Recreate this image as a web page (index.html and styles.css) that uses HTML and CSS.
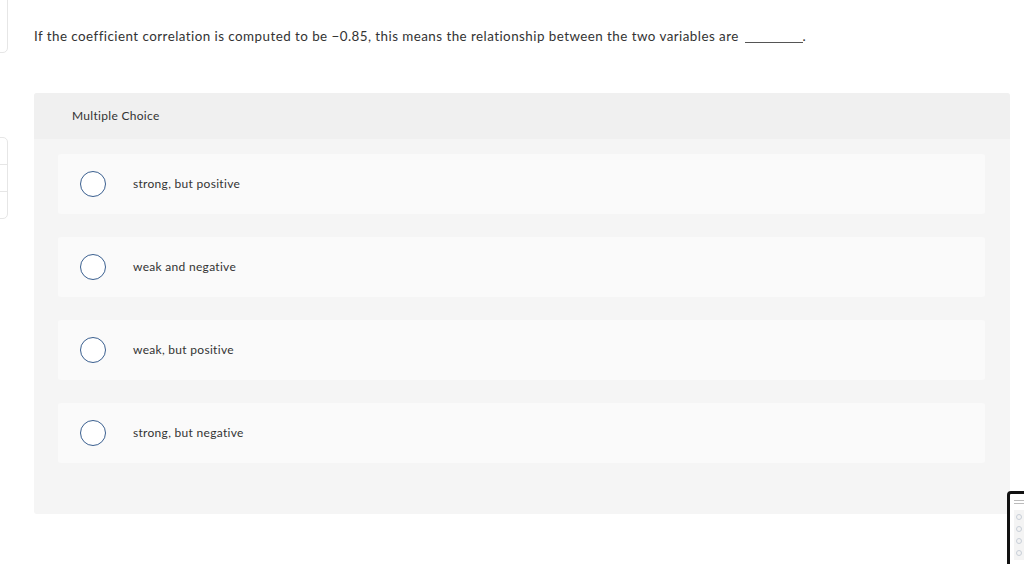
FILE: index.html
```html
<!DOCTYPE html>
<html>
<head>
<meta charset="utf-8">
<link rel="stylesheet" href="styles.css">
</head>
<body>
<div class="side-top"></div>
<div class="side-tools">
  <div class="tool"></div>
  <div class="tool"></div>
  <div class="tool"></div>
</div>
<main class="page">
  <p class="question">If the coefficient correlation is computed to be −0.85, this means the relationship between the two variables are <span class="blank"></span>.</p>
  <section class="panel">
    <div class="panel-head">Multiple Choice</div>
    <div class="panel-body">
      <label class="option"><span class="radio"></span><span class="opt-text">strong, but positive</span></label>
      <label class="option"><span class="radio"></span><span class="opt-text">weak and negative</span></label>
      <label class="option"><span class="radio"></span><span class="opt-text">weak, but positive</span></label>
      <label class="option"><span class="radio"></span><span class="opt-text">strong, but negative</span></label>
    </div>
  </section>
</main>
<div class="thumb">
  <div class="thumb-line"></div>
  <div class="thumb-line short"></div>
  <div class="thumb-panel">
    <div class="thumb-dot"></div>
    <div class="thumb-dot"></div>
    <div class="thumb-dot"></div>
    <div class="thumb-dot"></div>
  </div>
</div>
</body>
</html>
```
FILE: styles.css
```css
html, body {
  margin: 0;
  padding: 0;
  background: #ffffff;
  overflow: hidden;
}
body {
  width: 1024px;
  height: 564px;
  position: relative;
  font-family: Lato, "Liberation Sans", sans-serif;
  color: #333333;
}
.side-top {
  position: absolute;
  left: -10px;
  top: -10px;
  width: 16px;
  height: 61px;
  border: 1px solid #e6e6e6;
  border-radius: 5px;
}
.side-tools {
  position: absolute;
  left: -10px;
  top: 137px;
  width: 16px;
  border: 1px solid #e6e6e6;
  border-radius: 5px;
  display: flex;
  flex-direction: column;
}
.tool {
  height: 26px;
  border-bottom: 1px solid #e6e6e6;
}
.tool:last-child {
  border-bottom: none;
}
.page {
  padding: 27px 14px 0 34px;
}
.question {
  margin: 0;
  font-size: 13.4px;
  line-height: 18px;
  letter-spacing: 0.45px;
  color: #333333;
}
.blank {
  display: inline-block;
  width: 58px;
  height: 1px;
  margin-left: 2px;
  border-bottom: 1px solid #555;
  vertical-align: -2px;
}
.panel {
  margin-top: 48px;
  width: 976px;
  background: #f5f5f5;
  border-radius: 3px;
  overflow: hidden;
}
.panel-head {
  height: 46px;
  background: #f0f0f0;
  padding-left: 38px;
  font-size: 12px;
  line-height: 46px;
  letter-spacing: 0.3px;
  color: #333333;
}
.panel-body {
  padding: 15px 25px 51px 24px;
  display: flex;
  flex-direction: column;
  gap: 23px;
}
.option {
  height: 60px;
  background: #fafafa;
  border-radius: 3px;
  display: flex;
  align-items: center;
  padding-left: 22px;
}
.radio {
  width: 24px;
  height: 24px;
  border: 1.3px solid #3a5f8f;
  border-radius: 50%;
  background: #ffffff;
  flex: none;
}
.opt-text {
  margin-left: 27px;
  margin-top: -1px;
  font-size: 12px;
  letter-spacing: 0.3px;
  color: #333333;
}
.thumb {
  position: absolute;
  left: 1007px;
  top: 491px;
  width: 40px;
  height: 90px;
  background: #ffffff;
  border: 3px solid #111;
  border-radius: 4px;
  padding: 6px 4px;
  box-sizing: border-box;
}
.thumb-line {
  height: 1px;
  background: #bbb;
  margin-bottom: 2px;
}
.thumb-line.short {
  width: 60%;
}
.thumb-panel {
  margin-top: 6px;
  background: #f4f4f4;
  padding: 4px 2px;
  display: flex;
  flex-direction: column;
  gap: 6px;
}
.thumb-dot {
  width: 4px;
  height: 4px;
  border: 1px solid #c8cfd8;
  border-radius: 50%;
}
```
